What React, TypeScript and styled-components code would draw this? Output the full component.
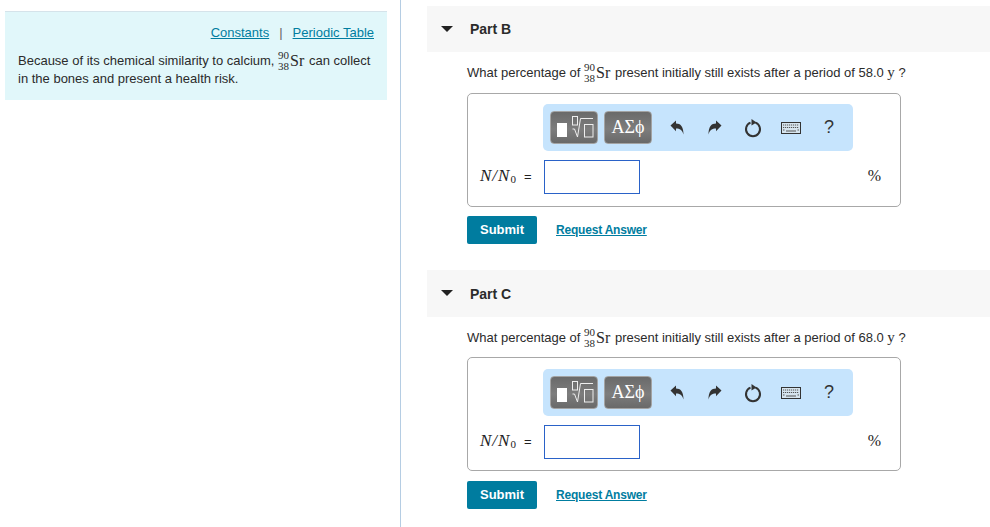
import React from "react";
import styled, { createGlobalStyle } from "styled-components";

const GlobalStyle = createGlobalStyle`
  html, body {
    margin: 0;
    padding: 0;
    background: #fff;
    overflow: hidden;
  }
  body {
    font-family: "Liberation Sans", Arial, sans-serif;
    color: #222;
  }
`;

const Page = styled.div`
  display: flex;
  width: 990px;
  height: 527px;
  overflow: hidden;
`;

const LeftPane = styled.aside`
  box-sizing: border-box;
  width: 401px;
  flex: none;
  padding: 11px 13px 0 5px;
  border-right: 1px solid #b5cde3;
`;

const InfoPanel = styled.div`
  box-sizing: border-box;
  height: 89px;
  background: #e1f7fa;
  border-top: 1px solid #d5e3ea;
  padding: 11px 13px 0;
`;

const LinkRow = styled.div`
  display: flex;
  justify-content: flex-end;
  align-items: center;
  gap: 10px;
  height: 18px;
  font-size: 13px;
  color: #666;
`;

const TopLink = styled.a`
  color: #007da0;
  text-decoration: underline;
`;

const InfoText = styled.p`
  margin: 11px 0 0;
  font-size: 13px;
  line-height: 18px;
  color: #2b2b2b;
`;

const IsotopeWrap = styled.span`
  display: inline-flex;
  align-items: center;
  vertical-align: middle;
  font-family: "Liberation Serif", serif;
  margin: -5px 1px -3px 0;
`;

const IsotopeStack = styled.span`
  display: inline-flex;
  flex-direction: column;
  align-items: flex-end;
  font-size: 11px;
  line-height: 10.5px;
  margin-right: 1px;
`;

const IsotopeSymbol = styled.span`
  font-size: 16px;
  line-height: 18px;
`;

const RightPane = styled.main`
  flex: 1;
  padding: 6px 0 0 26px;
`;

const Section = styled.section`
  margin-bottom: 26px;
`;

const PartHeader = styled.header<{ $height: number }>`
  display: flex;
  align-items: center;
  height: ${(p) => p.$height}px;
  background: #f7f7f7;
  padding: 0 0 0 14px;
  margin-bottom: 12px;
`;

const Caret = styled.span`
  width: 0;
  height: 0;
  border-left: 6px solid transparent;
  border-right: 6px solid transparent;
  border-top: 6px solid #222;
  margin-right: 17px;
  margin-top: -1px;
`;

const PartTitle = styled.h2`
  margin: 0;
  font-size: 14px;
  font-weight: 700;
  color: #2b2b2b;
`;

const PartBody = styled.div`
  padding-left: 40px;
  width: 434px;
`;

const Question = styled.p<{ $gap: number }>`
  margin: 0 0 ${(p) => p.$gap}px;
  font-size: 13px;
  line-height: 18px;
  white-space: nowrap;
  color: #2b2b2b;
`;

const SerifValue = styled.span`
  font-family: "Liberation Serif", serif;
  font-size: 15px;
  line-height: 0;
`;

const AnswerBox = styled.div<{ $top: number }>`
  box-sizing: border-box;
  height: 114px;
  border: 1px solid #a8a8a8;
  border-radius: 5px;
  padding: ${(p) => p.$top}px 9px 0 12px;
`;

const ToolbarRow = styled.div`
  display: flex;
  padding-left: 63px;
  margin-bottom: 9px;
`;

const Toolbar = styled.div`
  box-sizing: border-box;
  display: flex;
  align-items: center;
  width: 310px;
  height: 47px;
  background: #c6e4fd;
  border-radius: 5px;
  padding: 0 0 0 7px;
`;

const TemplateButton = styled.div`
  box-sizing: border-box;
  display: flex;
  align-items: center;
  justify-content: center;
  width: 48px;
  height: 33px;
  margin: -1px 6px 0 0;
  border-radius: 4px;
  border: 1px solid #a3a3a3;
  background: linear-gradient(#6a6a6a, #7d7d7d 55%, #696969);
  color: #fff;
  font-family: "Liberation Serif", serif;
  font-size: 18px;
`;

const ToolIcon = styled.span`
  display: flex;
  align-items: center;
  justify-content: center;
  width: 38px;
  color: #333;
`;

const HelpMark = styled.span`
  font-size: 18px;
  color: #333;
`;

const InputRow = styled.div`
  display: flex;
  align-items: center;
`;

const MathLabel = styled.span`
  font-family: "Liberation Serif", serif;
  font-style: italic;
  font-size: 17px;
  letter-spacing: 1px;
  color: #222;
  width: 64px;
  margin-top: -2px;
  white-space: nowrap;
`;

const Sub = styled.span`
  position: relative;
  top: 2px;
  font-style: normal;
  font-size: 11px;
  letter-spacing: 0;
`;

const Equals = styled.span`
  font-family: "Liberation Sans", sans-serif;
  font-style: normal;
  font-size: 13px;
  letter-spacing: 0;
  margin-left: 8px;
`;

const AnswerInput = styled.input`
  box-sizing: border-box;
  width: 96px;
  height: 34px;
  padding: 0;
  border: 1px solid #2a62c8;
  background: #fff;
  outline: none;
`;

const Unit = styled.span`
  margin: -2px 10px 0 auto;
  font-family: "Liberation Serif", serif;
  font-size: 16px;
  color: #222;
`;

const Actions = styled.div<{ $top: number }>`
  display: flex;
  align-items: center;
  margin-top: ${(p) => p.$top}px;
`;

const SubmitButton = styled.button`
  width: 70px;
  height: 28px;
  padding: 0 0 2px;
  border: none;
  border-radius: 2px;
  background: #007c9f;
  color: #fff;
  font-family: inherit;
  font-size: 13px;
  font-weight: 700;
`;

const RequestLink = styled.a`
  margin: -1px 0 0 19px;
  color: #007da0;
  font-size: 12px;
  font-weight: 700;
  letter-spacing: -0.2px;
  text-decoration: underline;
`;

const Isotope = () => (
  <IsotopeWrap>
    <IsotopeStack>
      <span>90</span>
      <span>38</span>
    </IsotopeStack>
    <IsotopeSymbol>Sr</IsotopeSymbol>
  </IsotopeWrap>
);

const TemplateIcon = () => (
  <svg width="44" height="30" viewBox="0 0 44 30" fill="none">
    <rect x="5" y="11" width="10" height="14" fill="#fff" />
    <rect x="20.5" y="4.5" width="5" height="8.5" stroke="#eee" />
    <path d="M20.5 17h2l3 8 3-18.5H41" stroke="#eee" />
    <rect x="32.5" y="12.5" width="8.5" height="12.5" stroke="#eee" />
  </svg>
);

const UndoIcon = ({ flip }: { flip?: boolean }) => (
  <svg width="14" height="15" viewBox="0 0 14 15" style={flip ? { transform: "scaleX(-1)" } : undefined}>
    <path d="M0.5 5.5L6 0.5v3c4.5 0 7.5 3 7.5 11C12 10 10 8.6 6 8.6v2.6z" fill="#333" />
  </svg>
);

const RedoCircleIcon = () => (
  <svg width="18" height="20" viewBox="0 0 18 20" fill="none">
    <path d="M11.5 4.6a7 7 0 1 1-5 0" stroke="#333" strokeWidth="2" />
    <path d="M7.5 1l5 3.6-5 2.9z" fill="#333" />
  </svg>
);

const KeyboardIcon = () => (
  <svg width="20" height="12" viewBox="0 0 20 12" fill="none">
    <rect x="0.5" y="0.5" width="19" height="11" fill="#d6e4ee" stroke="#333" />
    <path d="M2 3h16M2 5.5h16" stroke="#555" strokeWidth="1.2" strokeDasharray="1.2 0.8" />
    <path d="M2 8h1.5M5 9h10M16.5 8H18" stroke="#555" strokeWidth="1.2" />
  </svg>
);

const Part = ({
  name,
  years,
  headerHeight,
  questionGap,
  boxTop,
  actionsTop,
}: {
  name: string;
  years: string;
  headerHeight: number;
  questionGap: number;
  boxTop: number;
  actionsTop: number;
}) => (
  <Section>
    <PartHeader $height={headerHeight}>
      <Caret />
      <PartTitle>{name}</PartTitle>
    </PartHeader>
    <PartBody>
      <Question $gap={questionGap}>
        What percentage of <Isotope /> present initially still exists after a
        period of {years} <SerifValue>y</SerifValue> ?
      </Question>
      <AnswerBox $top={boxTop}>
        <ToolbarRow>
          <Toolbar>
            <TemplateButton>
              <TemplateIcon />
            </TemplateButton>
            <TemplateButton>ΑΣϕ</TemplateButton>
            <ToolIcon>
              <UndoIcon />
            </ToolIcon>
            <ToolIcon>
              <UndoIcon flip />
            </ToolIcon>
            <ToolIcon>
              <RedoCircleIcon />
            </ToolIcon>
            <ToolIcon>
              <KeyboardIcon />
            </ToolIcon>
            <ToolIcon>
              <HelpMark>?</HelpMark>
            </ToolIcon>
          </Toolbar>
        </ToolbarRow>
        <InputRow>
          <MathLabel>
            N/N<Sub>0</Sub>
            <Equals>=</Equals>
          </MathLabel>
          <AnswerInput aria-label="N/N0" />
          <Unit>%</Unit>
        </InputRow>
      </AnswerBox>
      <Actions $top={actionsTop}>
        <SubmitButton>Submit</SubmitButton>
        <RequestLink>Request Answer</RequestLink>
      </Actions>
    </PartBody>
  </Section>
);

export default function App() {
  return (
    <>
      <GlobalStyle />
      <Page>
        <LeftPane>
          <InfoPanel>
            <LinkRow>
              <TopLink>Constants</TopLink>
              <span>|</span>
              <TopLink>Periodic Table</TopLink>
            </LinkRow>
            <InfoText>
              Because of its chemical similarity to calcium, <Isotope /> can
              collect in the bones and present a health risk.
            </InfoText>
          </InfoPanel>
        </LeftPane>
        <RightPane>
          <Part name="Part B" years="58.0" headerHeight={46} questionGap={11} boxTop={10} actionsTop={9} />
          <Part name="Part C" years="68.0" headerHeight={47} questionGap={10} boxTop={11} actionsTop={10} />
        </RightPane>
      </Page>
    </>
  );
}
